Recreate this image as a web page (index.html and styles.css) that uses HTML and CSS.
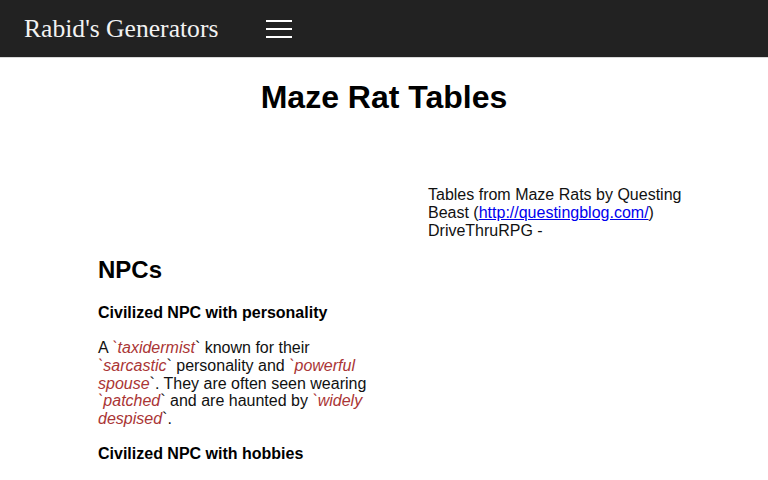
FILE: index.html
```html
<!DOCTYPE html>
<html>
<head>
<meta charset="utf-8">
<title>Maze Rat Tables</title>
<link rel="stylesheet" href="styles.css">
</head>
<body>
<nav class="navbar">
  <span class="brand">Rabid's Generators</span>
  <span class="burger" aria-label="menu"><i></i><i></i><i></i></span>
</nav>
<main class="page">
  <h1 class="title">Maze Rat Tables</h1>
  <div class="columns">
    <section class="left">
      <div class="spacer"></div>
      <h2>NPCs</h2>
      <h3>Civilized NPC with personality</h3>
      <p>A <em class="v">`taxidermist</em>` known for their <em class="v">`sarcastic</em>` personality and <em class="v">`powerful spouse</em>`. They are often seen wearing <em class="v">`patched</em>` and are haunted by <em class="v">`widely despised</em>`.</p>
      <h3>Civilized NPC with hobbies</h3>
      <p>A <em class="v">`gambler</em>` who enjoys <em class="v">`fishing</em>` and is known to be <em class="v">`tired</em>`.</p>
    </section>
    <aside class="right">
      <p>Tables from Maze Rats by Questing Beast (<a href="#">http://questingblog.com/</a>) DriveThruRPG -</p>
    </aside>
  </div>
</main>
</body>
</html>
```
FILE: styles.css
```css
html, body {
  margin: 0;
  padding: 0;
  background: #fff;
}
body {
  font-family: "Liberation Sans", Arial, sans-serif;
  font-size: 16px;
  color: #111;
}
.navbar {
  height: 58px;
  background: #222;
  border-bottom: 1px solid #d8d8d8;
  box-sizing: border-box;
  display: flex;
  align-items: center;
  padding-left: 24px;
  gap: 48px;
}
.brand {
  font-family: "Liberation Serif", "Times New Roman", serif;
  font-size: 25.6px;
  color: #f2f2f2;
  margin-top: 0;
}
.burger {
  display: flex;
  flex-direction: column;
  gap: 6px;
  width: 26px;
  margin-top: 0;
}
.burger i {
  display: block;
  height: 2px;
  background: #fff;
}
.title {
  text-align: center;
  font-size: 32px;
  margin: 21px 0 0;
  color: #000;
}
.columns {
  display: flex;
  padding: 0 60px 0 98px;
  gap: 50px;
}
.left {
  width: 280px;
}
.right {
  width: 280px;
  padding-top: 54px;
}
.spacer {
  height: 120px;
}
h2 {
  font-size: 24px;
  margin: 20px 0;
  color: #000;
}
h3 {
  font-size: 16px;
  margin: 17px 0;
  color: #000;
}
p {
  margin: 16px 0;
  line-height: 17.75px;
}
.right p {
  line-height: 18px;
}
.v {
  color: #aa3535;
}
a {
  color: #0000ee;
}
```
